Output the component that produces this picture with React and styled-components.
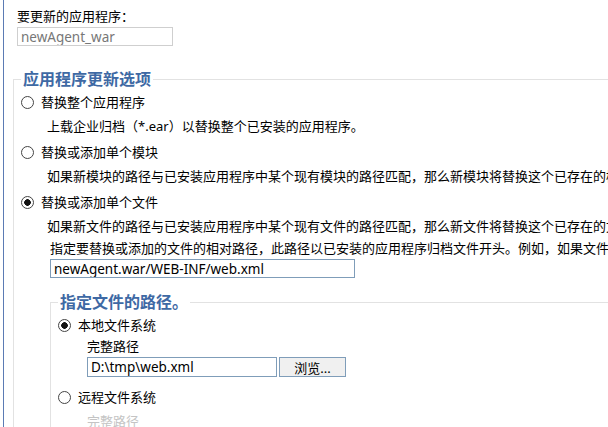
import React from 'react';
import styled, { createGlobalStyle } from 'styled-components';

const GlobalStyle = createGlobalStyle`
  html, body {
    margin: 0;
    padding: 0;
    overflow: hidden;
    background: #fff;
  }
  body {
    font-family: "Noto Sans", "Noto Sans CJK SC", sans-serif;
    font-size: 13px;
    color: #000;
  }
`;

const Page = styled.div`
  margin-left: 3px;
  padding-left: 9px;
  border-left: 1px solid #5b7bb4;
  min-height: 427px;
  white-space: nowrap;
`;

const Header = styled.div`
  padding: 7px 0 0 4px;
`;

const FieldLabel = styled.div`
  line-height: 18px;
  height: 18px;
  margin-bottom: 2px;
  color: ${(p) => (p.$muted ? '#c4c4c4' : '#000')};
`;

const TextInput = styled.input`
  box-sizing: border-box;
  display: block;
  width: ${(p) => p.$width}px;
  height: ${(p) => p.$height || 19}px;
  margin: 0;
  padding: 0 3px;
  font: inherit;
  font-size: 13.5px;
  color: #000;
  background: #fff;
  border: 1px solid #7f9db9;
  outline: none;

  &:disabled {
    color: #777;
    border-color: #cfcfcf;
    background: #fff;
  }
`;

const Group = styled.fieldset`
  box-sizing: border-box;
  width: 1000px;
  min-width: 0;
  margin: ${(p) => p.$top}px 0 0 ${(p) => p.$left || 0}px;
  padding: 0 0 0 7px;
  border: 1px solid #e2e2e2;
  border-right: none;
  border-bottom: none;
`;

const Legend = styled.legend`
  padding: 0 2px;
  margin: 0;
  height: 22px;
  line-height: 22px;
  font-size: 16px;
  font-weight: bold;
  color: #3e69a4;
`;

const Option = styled.div`
  margin-bottom: 2px;
`;

const RadioRow = styled.label`
  display: flex;
  align-items: center;
  gap: 7px;
  height: 24px;
  line-height: 24px;
`;

const Radio = styled.input.attrs({ type: 'radio' })`
  appearance: none;
  box-sizing: border-box;
  flex: none;
  width: 13px;
  height: 13px;
  margin: 0;
  border: 1px solid #444;
  border-radius: 50%;
  background: #fff;

  &:checked {
    background: radial-gradient(circle, #111 0 3px, #fff 3.6px);
  }
`;

const Desc = styled.div`
  padding-left: ${(p) => p.$indent || 26}px;
  line-height: ${(p) => p.$line || 24}px;
  height: ${(p) => p.$line || 24}px;
`;

const Indented = styled.div`
  padding-left: ${(p) => p.$indent}px;
  margin-top: ${(p) => p.$top || 0}px;
`;

const BrowseRow = styled.div`
  display: flex;
  gap: 2px;
  margin-top: 1px;
`;

const BrowseButton = styled.button`
  box-sizing: border-box;
  width: 67px;
  height: 20px;
  padding: 0;
  font: inherit;
  font-size: 13px;
  color: #000;
  background: #f0f0f0;
  border: 1px solid #7f9db9;
  border-radius: 0;
`;

export default function App() {
  return (
    <>
      <GlobalStyle />
      <Page>
        <Header>
          <FieldLabel>要更新的应用程序：</FieldLabel>
          <TextInput $width={156} defaultValue="newAgent_war" disabled />
        </Header>

        <Group $top={22}>
          <Legend>应用程序更新选项</Legend>

          <Option>
            <RadioRow>
              <Radio name="mode" />
              替换整个应用程序
            </RadioRow>
            <Desc>上载企业归档（*.ear）以替换整个已安装的应用程序。</Desc>
          </Option>

          <Option>
            <RadioRow>
              <Radio name="mode" />
              替换或添加单个模块
            </RadioRow>
            <Desc>
              如果新模块的路径与已安装应用程序中某个现有模块的路径匹配，那么新模块将替换这个已存在的模块。否则，新模块将添加到已安装的应用程序中。
            </Desc>
          </Option>

          <Option>
            <RadioRow>
              <Radio name="mode" defaultChecked />
              替换或添加单个文件
            </RadioRow>
            <Desc>
              如果新文件的路径与已安装应用程序中某个现有文件的路径匹配，那么新文件将替换这个已存在的文件。否则，新文件将添加到已安装的应用程序中。
            </Desc>
            <Desc $indent={29} $line={20}>
              指定要替换或添加的文件的相对路径，此路径以已安装的应用程序归档文件开头。例如，如果文件位于 Web 模块中，则指定 newAgent.war/WEB-INF/web.xml。
            </Desc>
            <Indented $indent={29} $top={1}>
              <TextInput $width={305} defaultValue="newAgent.war/WEB-INF/web.xml" />
            </Indented>

            <Group $top={13} $left={29}>
              <Legend>指定文件的路径。</Legend>
              <RadioRow>
                <Radio name="source" defaultChecked />
                本地文件系统
              </RadioRow>
              <Indented $indent={29}>
                <FieldLabel>完整路径</FieldLabel>
                <BrowseRow>
                  <TextInput $width={190} $height={20} defaultValue="D:\tmp\web.xml" />
                  <BrowseButton type="button">浏览...</BrowseButton>
                </BrowseRow>
              </Indented>
              <Indented $indent={0} $top={8}>
                <RadioRow>
                  <Radio name="source" />
                  远程文件系统
                </RadioRow>
              </Indented>
              <Indented $indent={29} $top={3}>
                <FieldLabel $muted>完整路径</FieldLabel>
              </Indented>
            </Group>
          </Option>
        </Group>
      </Page>
    </>
  );
}
